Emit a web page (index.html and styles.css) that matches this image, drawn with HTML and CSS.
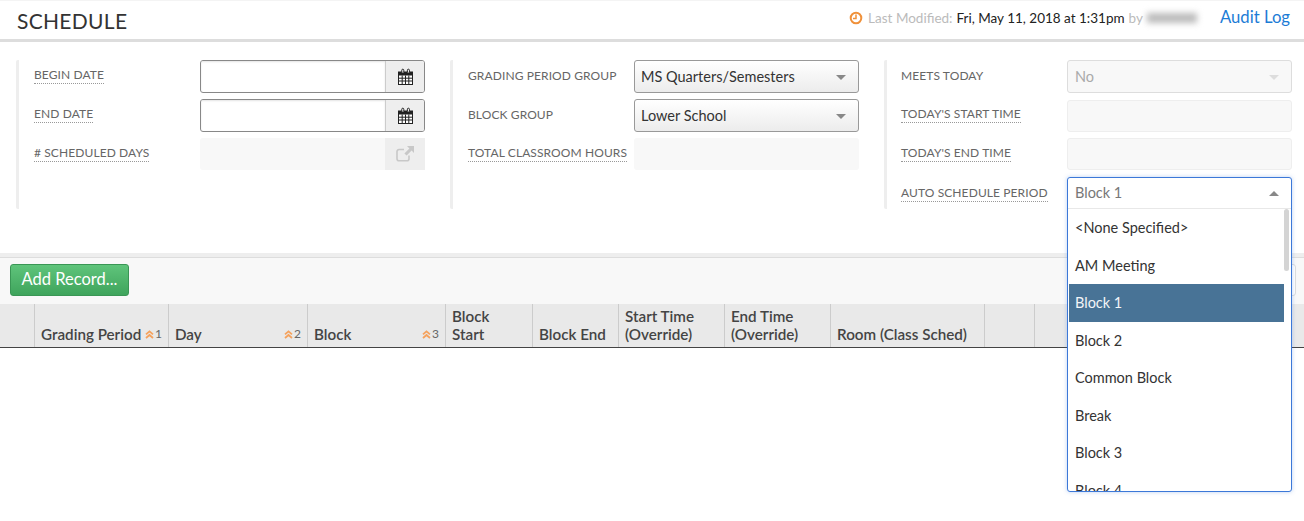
FILE: index.html
```html
<!DOCTYPE html>
<html lang="en">
<head>
    <meta charset="UTF-8">
    <title>Schedule</title>
    <link rel="stylesheet" href="styles.css">
</head>
<body>
    <header class="pageHead">
        <h1>SCHEDULE</h1>
        <div class="modified">
            <svg class="clockIcon" viewBox="0 0 14 14" width="14" height="14"><circle cx="7" cy="7" r="5.3" fill="none" stroke="#f0913a" stroke-width="2"/><path d="M7 3.6V7.6H4" fill="none" stroke="#f0913a" stroke-width="1.5"/></svg>
            <span class="muted">Last Modified:</span> Fri, May 11, 2018 at 1:31pm <span class="muted">by</span>
            <span class="blurName"></span>
        </div>
        <a class="auditLink" href="#">Audit Log</a>
    </header>

    <section class="panel">
        <div class="column">
            <div class="field">
                <label class="dotted">BEGIN DATE</label>
                <div class="inputGroup">
                    <span class="inputBox"></span>
                    <span class="addon">
                        <svg viewBox="0 0 17 18" width="17" height="18"><path d="M1 3.5h15v13.5H1z" fill="#222"/><path d="M2 7.5h13v8.6H2z" fill="#fff"/><path d="M2 10.2h13M2 13h13M5.2 7.5v9M8.5 7.5v9M11.8 7.5v9" stroke="#222" stroke-width="1"/><path d="M4.8 4.4V2.2a1 1 0 0 1 2 0v2.2M10.4 4.4V2.2a1 1 0 0 1 2 0v2.2" fill="#fff" stroke="#222" stroke-width="1"/></svg>
                    </span>
                </div>
            </div>
            <div class="field">
                <label class="dotted">END DATE</label>
                <div class="inputGroup">
                    <span class="inputBox"></span>
                    <span class="addon">
                        <svg viewBox="0 0 17 18" width="17" height="18"><path d="M1 3.5h15v13.5H1z" fill="#222"/><path d="M2 7.5h13v8.6H2z" fill="#fff"/><path d="M2 10.2h13M2 13h13M5.2 7.5v9M8.5 7.5v9M11.8 7.5v9" stroke="#222" stroke-width="1"/><path d="M4.8 4.4V2.2a1 1 0 0 1 2 0v2.2M10.4 4.4V2.2a1 1 0 0 1 2 0v2.2" fill="#fff" stroke="#222" stroke-width="1"/></svg>
                    </span>
                </div>
            </div>
            <div class="field short">
                <label class="dotted"># SCHEDULED DAYS</label>
                <div class="readonlyGroup">
                    <span class="addon off">
                        <svg viewBox="0 0 20 18" width="20" height="18"><path d="M14 10.5v3.2a2 2 0 0 1-2 2H4a2 2 0 0 1-2-2V6.5a2 2 0 0 1 2-2h5" fill="none" stroke="#c8c8c8" stroke-width="1.6"/><path d="M12 1h7v7l-2.4-2.4-5 5-2.2-2.2 5-5z" fill="#c8c8c8"/></svg>
                    </span>
                </div>
            </div>
        </div>

        <div class="column">
            <div class="field">
                <label>GRADING PERIOD GROUP</label>
                <div class="select">MS Quarters/Semesters<i class="caret"></i></div>
            </div>
            <div class="field">
                <label>BLOCK GROUP</label>
                <div class="select">Lower School<i class="caret"></i></div>
            </div>
            <div class="field short">
                <label class="dotted">TOTAL CLASSROOM HOURS</label>
                <div class="readonlyGroup"></div>
            </div>
        </div>

        <div class="column">
            <div class="field">
                <label>MEETS TODAY</label>
                <div class="select disabled">No<i class="caret"></i></div>
            </div>
            <div class="field">
                <label class="dotted">TODAY'S START TIME</label>
                <div class="readonlyGroup bordered"></div>
            </div>
            <div class="field short">
                <label class="dotted">TODAY'S END TIME</label>
                <div class="readonlyGroup bordered"></div>
            </div>
            <div class="field last">
                <label class="dotted">AUTO SCHEDULE PERIOD</label>
                <div class="comboSlot">
                    <div class="combo">
                        <div class="comboHead">Block 1<i class="caret up"></i></div>
                        <div class="comboList">
                            <ul>
                                <li>&lt;None Specified&gt;</li>
                                <li>AM Meeting</li>
                                <li class="selected">Block 1</li>
                                <li>Block 2</li>
                                <li>Common Block</li>
                                <li>Break</li>
                                <li>Block 3</li>
                                <li>Block 4</li>
                            </ul>
                            <span class="scrollThumb"></span>
                        </div>
                    </div>
                </div>
            </div>
        </div>
    </section>

    <section class="records">
        <div class="toolbar">
            <button class="addBtn">Add Record...</button>
            <span class="toolBtn"></span>
        </div>
        <div class="tableHead">
            <div class="th blank"></div>
            <div class="th sort">Grading Period <span class="order"><svg viewBox="0 0 9 9" width="9" height="9"><path d="M1 4.4l3.5-3 3.5 3M1 8l3.5-3 3.5 3" fill="none" stroke="#f5a25d" stroke-width="1.8"/></svg>1</span></div>
            <div class="th sort">Day <span class="order"><svg viewBox="0 0 9 9" width="9" height="9"><path d="M1 4.4l3.5-3 3.5 3M1 8l3.5-3 3.5 3" fill="none" stroke="#f5a25d" stroke-width="1.8"/></svg>2</span></div>
            <div class="th sort">Block <span class="order"><svg viewBox="0 0 9 9" width="9" height="9"><path d="M1 4.4l3.5-3 3.5 3M1 8l3.5-3 3.5 3" fill="none" stroke="#f5a25d" stroke-width="1.8"/></svg>3</span></div>
            <div class="th">Block<br>Start</div>
            <div class="th">Block End</div>
            <div class="th">Start Time<br>(Override)</div>
            <div class="th">End Time<br>(Override)</div>
            <div class="th">Room (Class Sched)</div>
            <div class="th"></div>
            <div class="th"></div>
        </div>
    </section>
</body>
</html>
```

FILE: styles.css
```css
* {
    box-sizing: border-box;
}
html, body {
    height: 100%;
}
body {
    margin: 0;
    overflow: hidden;
    background-color: #fff;
    color: #333;
    font-family: "Lato", "Noto Sans", sans-serif;
    font-size: 14.5px;
}

/* page header */
.pageHead {
    display: flex;
    align-items: flex-start;
    height: 42px;
    padding: 8px 14px 0 17px;
    border-top: 1px solid #f4f4f4;
    border-bottom: 3px solid #ddd;
}
h1 {
    margin: 0;
    color: #333;
    font-size: 21px;
    font-weight: 400;
    line-height: 24px;
    letter-spacing: 0.3px;
}
.modified {
    display: flex;
    align-items: center;
    gap: 4px;
    margin-left: auto;
    height: 18px;
    font-size: 13.5px;
    color: #222;
}
.clockIcon {
    margin-right: 1px;
}
.muted {
    color: #bbb;
}
.blurName {
    width: 50px;
    height: 10px;
    margin-left: 0;
    background-color: #bbb;
    filter: blur(3px);
}
.auditLink {
    margin-left: 23px;
    margin-top: -2px;
    color: #1c7cd6;
    font-size: 16.7px;
    line-height: 20px;
    text-decoration: none;
}

/* form panel */
.panel {
    display: flex;
    gap: 25px;
    height: 211px;
    padding: 18px 12px 0 16px;
}
.column {
    display: flex;
    flex: 0 0 auto;
    flex-direction: column;
    gap: 6px;
    width: 409px;
    height: 149px;
    padding-left: 15px;
    border-left: 3px solid #eee;
    border-radius: 2px;
}
.column:last-child {
    width: 408px;
    padding-left: 14px;
}
.field {
    display: flex;
    align-items: center;
    height: 33px;
}
.field.short {
    height: 32px;
}
.field.last {
    height: 22px;
    margin-top: 7px;
}
label {
    flex: 0 0 166px;
    margin-bottom: 2px;
    color: #666;
    font-size: 12px;
    line-height: 16px;
    letter-spacing: 0.1px;
}
label.dotted {
    flex: 0 0 auto;
    width: fit-content;
    min-width: 0;
    border-bottom: 1px dotted #999;
}
.field > :last-child {
    width: 225px;
    margin-left: auto;
}
.inputGroup {
    display: flex;
    height: 33px;
    border: 1px solid #888;
    border-radius: 3px;
    overflow: hidden;
}
.inputBox {
    flex: 1;
    box-shadow: inset 0 1px 2px #e4e4e4;
}
.addon {
    display: flex;
    align-items: center;
    justify-content: center;
    width: 39px;
    background-color: #eee;
    border-left: 1px solid #ccc;
}
.readonlyGroup {
    display: flex;
    justify-content: flex-end;
    height: 32px;
    background-color: #f8f8f8;
    border-radius: 3px;
}
.readonlyGroup.bordered {
    border: 1px solid #eee;
}
.addon.off {
    width: 40px;
    padding-right: 1px;
    background-color: #eee;
    border: 0;
}
.select {
    position: relative;
    height: 33px;
    padding-left: 6px;
    color: #333;
    font-size: 14.5px;
    line-height: 31px;
    border: 1px solid #999;
    border-radius: 3px;
    background: linear-gradient(#fff, #ececec);
}
.select.disabled {
    padding-left: 7px;
    color: #aaa;
    background: #f8f8f8;
    border-color: #ddd;
}
.caret {
    position: absolute;
    top: 14px;
    right: 12px;
    border-left: 5px solid transparent;
    border-right: 5px solid transparent;
    border-top: 5px solid #888;
}
.select.disabled .caret {
    border-top-color: #ddd;
}
.caret.up {
    top: 13px;
    border-top: 0;
    border-bottom: 5px solid #888;
}

/* open dropdown lies over the table */
.comboSlot {
    position: relative;
    height: 22px;
}
.combo {
    position: absolute;
    top: -6px;
    left: 0;
    z-index: 5;
    width: 225px;
    height: 315px;
    border: 1px solid #3c78d8;
    border-radius: 3px;
    background-color: #fff;
    box-shadow: 0 0 4px rgba(60, 120, 216, 0.35);
    overflow: hidden;
}
.comboHead {
    position: relative;
    height: 31px;
    padding-left: 7px;
    color: #777;
    font-size: 14.5px;
    line-height: 30px;
    border-bottom: 1px solid #e8e8e8;
}
.comboList {
    position: relative;
    height: 282px;
    overflow: hidden;
}
.comboList ul {
    margin: 0;
    padding: 0 7px 0 1px;
    list-style: none;
}
.comboList li {
    height: 37.5px;
    padding-left: 6px;
    color: #333;
    font-size: 14.5px;
    line-height: 37px;
}
.comboList li.selected {
    color: #f2f5f8;
    background-color: #487396;
}
.scrollThumb {
    position: absolute;
    top: 0;
    right: 2px;
    width: 5px;
    height: 62px;
    border-radius: 3px;
    background-color: #d4d4d4;
}

/* records table */
.records {
    border-top: 4px solid #eee;
}
.toolbar {
    display: flex;
    justify-content: space-between;
    height: 47px;
    padding: 6px 8px 0 10px;
    background-color: #f8f8f8;
    border-top: 1px solid #ddd;
}
.addBtn {
    width: 119px;
    height: 32px;
    padding: 0 0 2px;
    color: #fff;
    font-family: inherit;
    font-size: 16.5px;
    background: linear-gradient(#5fc47b, #3fa45c);
    border: 1px solid #3a9655;
    border-radius: 3px;
}
.toolBtn {
    width: 40px;
    height: 32px;
    background-color: #fff;
    border: 1px solid #ddd;
    border-radius: 3px;
}
.tableHead {
    display: grid;
    grid-template-columns: 34px 134px 139px 138px 87px 86px 106px 106px 154px 50px 1fr;
    height: 44px;
    background-color: #e9e9e9;
    border-bottom: 1px solid #444;
}
.th {
    display: flex;
    flex-direction: column;
    justify-content: flex-end;
    padding: 0 6px 4px;
    color: #444;
    font-size: 15.2px;
    font-weight: 600;
    line-height: 18px;
    border-left: 1px solid #ccc;
}
.th.blank {
    border-left: 0;
}
.th:nth-child(n+5) {
    display: block;
    align-self: end;
    height: 100%;
    padding-top: 3px;
}
.th:nth-child(6),
.th:nth-child(9) {
    padding-top: 21px;
}
.th.sort {
    flex-direction: row;
    align-items: flex-end;
    justify-content: space-between;
    white-space: nowrap;
}
.order {
    display: inline-flex;
    align-items: center;
    gap: 1px;
    color: #666;
    font-size: 12px;
    font-weight: 400;
}
```
